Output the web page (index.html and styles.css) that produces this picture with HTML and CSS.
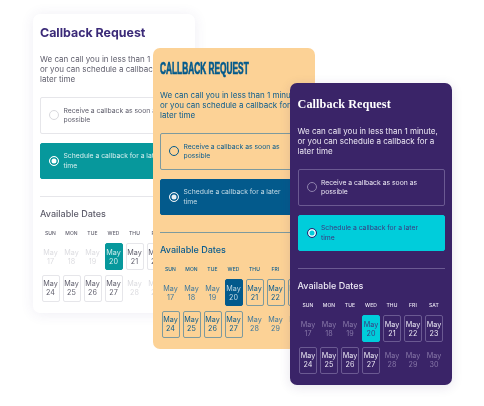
FILE: index.html
```html
<!DOCTYPE html>
<html lang="en">
<head>
<meta charset="utf-8">
<title>Callback Request</title>
<link rel="stylesheet" href="styles.css">
</head>
<body>
<main class="stage">
  <section class="card theme-light">
    <h2 class="title">Callback Request</h2>
    <p class="intro">We can call you in less than 1 minute, or you can schedule a callback for a later time</p>
    <div class="option"><span class="radio"></span><span>Receive a callback as soon as possible</span></div>
    <div class="option selected"><span class="radio"></span><span>Schedule a callback for a later time</span></div>
    <hr class="rule">
    <h3 class="dates-title">Available Dates</h3>
    <div class="calendar">
      <span class="wd">Sun</span><span class="wd">Mon</span><span class="wd">Tue</span><span class="wd">Wed</span><span class="wd">Thu</span><span class="wd">Fri</span><span class="wd">Sat</span>
      <span class="day off">May<br>17</span><span class="day off">May<br>18</span><span class="day off">May<br>19</span><span class="day active">May<br>20</span><span class="day">May<br>21</span><span class="day">May<br>22</span><span class="day">May<br>23</span>
      <span class="day">May<br>24</span><span class="day">May<br>25</span><span class="day">May<br>26</span><span class="day">May<br>27</span><span class="day off">May<br>28</span><span class="day off">May<br>29</span><span class="day off">May<br>30</span>
    </div>
  </section>

  <section class="card theme-sand">
    <h2 class="title">Callback Request</h2>
    <p class="intro">We can call you in less than 1 minute, or you can schedule a callback for a later time</p>
    <div class="option"><span class="radio"></span><span>Receive a callback as soon as possible</span></div>
    <div class="option selected"><span class="radio"></span><span>Schedule a callback for a later time</span></div>
    <hr class="rule">
    <h3 class="dates-title">Available Dates</h3>
    <div class="calendar">
      <span class="wd">Sun</span><span class="wd">Mon</span><span class="wd">Tue</span><span class="wd">Wed</span><span class="wd">Thu</span><span class="wd">Fri</span><span class="wd">Sat</span>
      <span class="day off">May<br>17</span><span class="day off">May<br>18</span><span class="day off">May<br>19</span><span class="day active">May<br>20</span><span class="day">May<br>21</span><span class="day">May<br>22</span><span class="day">May<br>23</span>
      <span class="day">May<br>24</span><span class="day">May<br>25</span><span class="day">May<br>26</span><span class="day">May<br>27</span><span class="day off">May<br>28</span><span class="day off">May<br>29</span><span class="day off">May<br>30</span>
    </div>
  </section>

  <section class="card theme-night">
    <h2 class="title">Callback Request</h2>
    <p class="intro">We can call you in less than 1 minute, or you can schedule a callback for a later time</p>
    <div class="option"><span class="radio"></span><span>Receive a callback as soon as possible</span></div>
    <div class="option selected"><span class="radio"></span><span>Schedule a callback for a later time</span></div>
    <hr class="rule">
    <h3 class="dates-title">Available Dates</h3>
    <div class="calendar">
      <span class="wd">Sun</span><span class="wd">Mon</span><span class="wd">Tue</span><span class="wd">Wed</span><span class="wd">Thu</span><span class="wd">Fri</span><span class="wd">Sat</span>
      <span class="day off">May<br>17</span><span class="day off">May<br>18</span><span class="day off">May<br>19</span><span class="day active">May<br>20</span><span class="day">May<br>21</span><span class="day">May<br>22</span><span class="day">May<br>23</span>
      <span class="day">May<br>24</span><span class="day">May<br>25</span><span class="day">May<br>26</span><span class="day">May<br>27</span><span class="day off">May<br>28</span><span class="day off">May<br>29</span><span class="day off">May<br>30</span>
    </div>
  </section>
</main>
</body>
</html>
```
FILE: styles.css
```css
* { box-sizing: border-box; margin: 0; padding: 0; }
html, body { background: #fff; }
body { font-family: "Inter", "Liberation Sans", sans-serif; }
.stage { position: relative; width: 484px; height: 406px; overflow: hidden; filter: blur(0.35px); }

.card {
  position: absolute;
  width: 162px;
  padding: 0 7.5px;
  border-radius: 7px;
  overflow: hidden;
  display: flex;
  flex-direction: column;
}
.title { flex: none; display: flex; align-items: center; white-space: nowrap; }
.intro { font-size: 8px; line-height: 10px; height: 30px; }
.option {
  flex: none;
  display: flex;
  align-items: center;
  gap: 4.5px;
  height: 36.5px;
  margin-top: 13px;
  padding: 0 22px 0 8px;
  border: 1px solid var(--line);
  border-radius: 2px;
  font-size: 6.8px;
  line-height: 9.3px;
}
.option.selected { margin-top: 9px; background: var(--accent); color: var(--on-accent); border-color: var(--accent); }
.radio {
  flex: none;
  width: 10px;
  height: 10px;
  border-radius: 50%;
  border: 1px solid var(--radio);
}
.selected .radio { border: 1.2px solid var(--ring); background: var(--dot); box-shadow: inset 0 0 0 1.5px var(--gap); }
.rule { flex: none; height: 1px; margin-top: 17px; border: 0; background: var(--line); }
.dates-title { margin-top: 11px; font-size: 9px; line-height: 12px; font-weight: 500; }
.calendar {
  display: grid;
  grid-template-columns: repeat(7, 18px);
  grid-template-rows: 8.5px 27px 27px;
  gap: 4.5px 3px;
  margin: 10px 0 0 1.5px;
}
.wd {
  font-size: 5px;
  line-height: 7px;
  font-weight: 500;
  text-align: center;
  text-transform: uppercase;
  letter-spacing: 0.1px;
}
.day {
  display: flex;
  align-items: center;
  justify-content: center;
  text-align: center;
  font-size: 7.2px;
  line-height: 9px;
  border: 1px solid var(--line);
  border-radius: 2px;
}
.day.off { border-color: transparent; color: var(--muted); }
.day.active { background: var(--accent); border-color: var(--accent); color: var(--on-accent); }

.theme-light {
  left: 33px; top: 14px; height: 299px;
  background: #fff; color: #5f5e6c;
  box-shadow: 0 1px 14px rgba(70, 60, 130, 0.09);
  --accent: #07989c; --on-accent: #d5eeee; --line: #e6e6ea; --muted: #dcdce0;
  --radio: #d9d9dd; --ring: #fff; --gap: #07989c; --dot: #fff;
}
.theme-light.card { padding-left: 7px; }
.theme-light .title { height: 40px; padding-bottom: 3px; font-size: 12.4px; font-weight: 700; color: #3b2a78; }
.theme-sand {
  left: 152.5px; top: 48px; height: 301px;
  background: #fcd296; color: #0b5c8e;
  --accent: #035a8c; --on-accent: #c4dbe6; --line: #7d9a9e; --muted: #3f789c;
  --radio: #035a8c; --ring: #e8eef2; --gap: #035a8c; --dot: #e8eef2;
}
.theme-sand .title {
  height: 42px;
  font-family: "Liberation Sans", sans-serif;
  font-size: 16px;
  font-weight: 700;
  text-transform: uppercase;
  color: #035a8c;
  -webkit-text-stroke: 0.7px #035a8c;
  transform: scaleX(0.52);
  transform-origin: left center;
}
.theme-night {
  left: 290px; top: 83px; height: 302px;
  background: #3a2468; color: #ece8f4;
  box-shadow: 0 2px 12px rgba(50, 30, 100, 0.12);
  --accent: #00cddb; --on-accent: #3a3a80; --line: #6b5a92; --muted: #8777a8;
  --radio: #8f82ad; --ring: #2f2170; --gap: #e6fbfd; --dot: #00cddb;
}
.theme-night .title { height: 43px; font-family: "Liberation Serif", serif; font-size: 12.2px; font-weight: 700; letter-spacing: 0.1px; color: #fff; }
```
